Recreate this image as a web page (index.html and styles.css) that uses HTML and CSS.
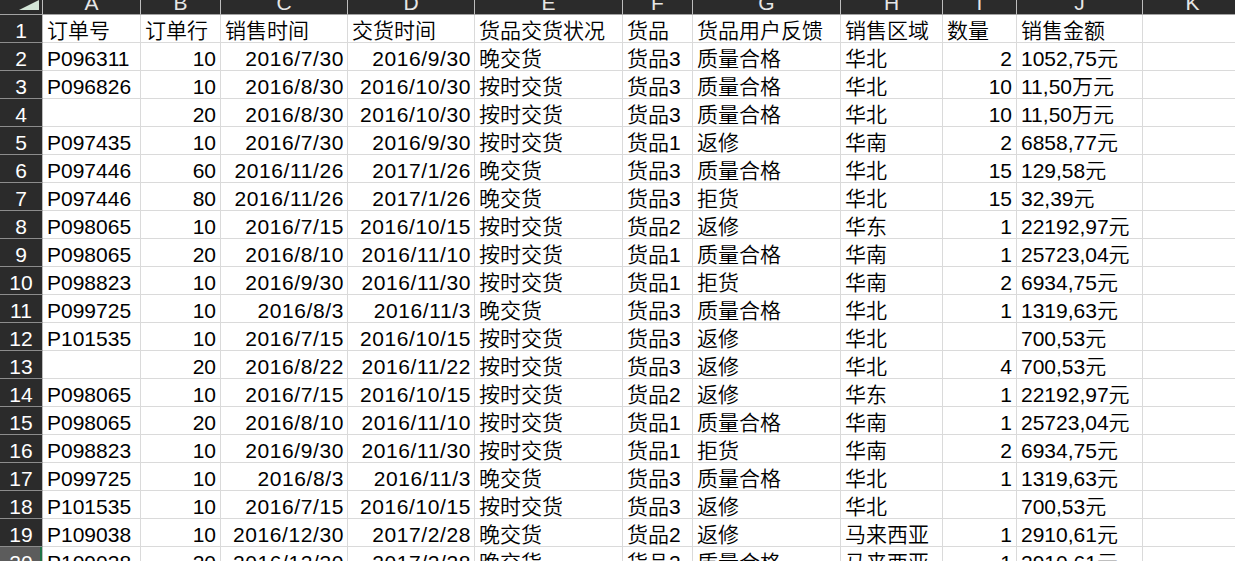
FILE: index.html
```html
<!DOCTYPE html>
<html lang="zh">
<head>
<meta charset="utf-8">
<title>Sheet</title>
<link rel="stylesheet" href="styles.css">
</head>
<body>
<div class="sheet">
  <div class="corner"><svg width="42" height="14" viewBox="0 0 42 14"><polygon points="19,10 39,0 39,10" fill="#d3e5d7"/></svg></div>
  <div class="ch">A</div><div class="ch">B</div><div class="ch">C</div><div class="ch">D</div><div class="ch">E</div><div class="ch">F</div><div class="ch">G</div><div class="ch">H</div><div class="ch">I</div><div class="ch">J</div><div class="ch">K</div>

  <div class="rh">1</div><div class="c">订单号</div><div class="c">订单行</div><div class="c">销售时间</div><div class="c">交货时间</div><div class="c">货品交货状况</div><div class="c">货品</div><div class="c">货品用户反馈</div><div class="c">销售区域</div><div class="c">数量</div><div class="c">销售金额</div><div class="c"></div>

  <div class="rh">2</div><div class="c">P096311</div><div class="c r">10</div><div class="c r d">2016/7/30</div><div class="c r d">2016/9/30</div><div class="c">晚交货</div><div class="c">货品3</div><div class="c">质量合格</div><div class="c">华北</div><div class="c r">2</div><div class="c">1052,75元</div><div class="c"></div>

  <div class="rh">3</div><div class="c">P096826</div><div class="c r">10</div><div class="c r d">2016/8/30</div><div class="c r d">2016/10/30</div><div class="c">按时交货</div><div class="c">货品3</div><div class="c">质量合格</div><div class="c">华北</div><div class="c r">10</div><div class="c">11,50万元</div><div class="c"></div>

  <div class="rh">4</div><div class="c"></div><div class="c r">20</div><div class="c r d">2016/8/30</div><div class="c r d">2016/10/30</div><div class="c">按时交货</div><div class="c">货品3</div><div class="c">质量合格</div><div class="c">华北</div><div class="c r">10</div><div class="c">11,50万元</div><div class="c"></div>

  <div class="rh">5</div><div class="c">P097435</div><div class="c r">10</div><div class="c r d">2016/7/30</div><div class="c r d">2016/9/30</div><div class="c">按时交货</div><div class="c">货品1</div><div class="c">返修</div><div class="c">华南</div><div class="c r">2</div><div class="c">6858,77元</div><div class="c"></div>

  <div class="rh">6</div><div class="c">P097446</div><div class="c r">60</div><div class="c r d">2016/11/26</div><div class="c r d">2017/1/26</div><div class="c">晚交货</div><div class="c">货品3</div><div class="c">质量合格</div><div class="c">华北</div><div class="c r">15</div><div class="c">129,58元</div><div class="c"></div>

  <div class="rh">7</div><div class="c">P097446</div><div class="c r">80</div><div class="c r d">2016/11/26</div><div class="c r d">2017/1/26</div><div class="c">晚交货</div><div class="c">货品3</div><div class="c">拒货</div><div class="c">华北</div><div class="c r">15</div><div class="c">32,39元</div><div class="c"></div>

  <div class="rh">8</div><div class="c">P098065</div><div class="c r">10</div><div class="c r d">2016/7/15</div><div class="c r d">2016/10/15</div><div class="c">按时交货</div><div class="c">货品2</div><div class="c">返修</div><div class="c">华东</div><div class="c r">1</div><div class="c">22192,97元</div><div class="c"></div>

  <div class="rh">9</div><div class="c">P098065</div><div class="c r">20</div><div class="c r d">2016/8/10</div><div class="c r d">2016/11/10</div><div class="c">按时交货</div><div class="c">货品1</div><div class="c">质量合格</div><div class="c">华南</div><div class="c r">1</div><div class="c">25723,04元</div><div class="c"></div>

  <div class="rh">10</div><div class="c">P098823</div><div class="c r">10</div><div class="c r d">2016/9/30</div><div class="c r d">2016/11/30</div><div class="c">按时交货</div><div class="c">货品1</div><div class="c">拒货</div><div class="c">华南</div><div class="c r">2</div><div class="c">6934,75元</div><div class="c"></div>

  <div class="rh">11</div><div class="c">P099725</div><div class="c r">10</div><div class="c r d">2016/8/3</div><div class="c r d">2016/11/3</div><div class="c">晚交货</div><div class="c">货品3</div><div class="c">质量合格</div><div class="c">华北</div><div class="c r">1</div><div class="c">1319,63元</div><div class="c"></div>

  <div class="rh">12</div><div class="c">P101535</div><div class="c r">10</div><div class="c r d">2016/7/15</div><div class="c r d">2016/10/15</div><div class="c">按时交货</div><div class="c">货品3</div><div class="c">返修</div><div class="c">华北</div><div class="c r"></div><div class="c">700,53元</div><div class="c"></div>

  <div class="rh">13</div><div class="c"></div><div class="c r">20</div><div class="c r d">2016/8/22</div><div class="c r d">2016/11/22</div><div class="c">按时交货</div><div class="c">货品3</div><div class="c">返修</div><div class="c">华北</div><div class="c r">4</div><div class="c">700,53元</div><div class="c"></div>

  <div class="rh">14</div><div class="c">P098065</div><div class="c r">10</div><div class="c r d">2016/7/15</div><div class="c r d">2016/10/15</div><div class="c">按时交货</div><div class="c">货品2</div><div class="c">返修</div><div class="c">华东</div><div class="c r">1</div><div class="c">22192,97元</div><div class="c"></div>

  <div class="rh">15</div><div class="c">P098065</div><div class="c r">20</div><div class="c r d">2016/8/10</div><div class="c r d">2016/11/10</div><div class="c">按时交货</div><div class="c">货品1</div><div class="c">质量合格</div><div class="c">华南</div><div class="c r">1</div><div class="c">25723,04元</div><div class="c"></div>

  <div class="rh">16</div><div class="c">P098823</div><div class="c r">10</div><div class="c r d">2016/9/30</div><div class="c r d">2016/11/30</div><div class="c">按时交货</div><div class="c">货品1</div><div class="c">拒货</div><div class="c">华南</div><div class="c r">2</div><div class="c">6934,75元</div><div class="c"></div>

  <div class="rh">17</div><div class="c">P099725</div><div class="c r">10</div><div class="c r d">2016/8/3</div><div class="c r d">2016/11/3</div><div class="c">晚交货</div><div class="c">货品3</div><div class="c">质量合格</div><div class="c">华北</div><div class="c r">1</div><div class="c">1319,63元</div><div class="c"></div>

  <div class="rh">18</div><div class="c">P101535</div><div class="c r">10</div><div class="c r d">2016/7/15</div><div class="c r d">2016/10/15</div><div class="c">按时交货</div><div class="c">货品3</div><div class="c">返修</div><div class="c">华北</div><div class="c r"></div><div class="c">700,53元</div><div class="c"></div>

  <div class="rh">19</div><div class="c">P109038</div><div class="c r">10</div><div class="c r d">2016/12/30</div><div class="c r d">2017/2/28</div><div class="c">晚交货</div><div class="c">货品2</div><div class="c">返修</div><div class="c">马来西亚</div><div class="c r">1</div><div class="c">2910,61元</div><div class="c"></div>

  <div class="rh active">20</div><div class="c">P109038</div><div class="c r">20</div><div class="c r d">2016/12/30</div><div class="c r d">2017/2/28</div><div class="c">晚交货</div><div class="c">货品2</div><div class="c">质量合格</div><div class="c">马来西亚</div><div class="c r">1</div><div class="c">2910,61元</div><div class="c"></div>
</div>
</body>
</html>
```

FILE: styles.css
```css
html, body {
  margin: 0;
  padding: 0;
  background: #ffffff;
  overflow: hidden;
}

.sheet {
  display: grid;
  grid-template-columns: 43px 98px 80px 127px 127px 148px 70px 148px 102px 74px 126px 100px;
  grid-template-rows: 15px repeat(20, 28px);
  width: 1243px;
  font-family: "Liberation Sans", "Noto Sans CJK SC", sans-serif;
  font-size: 21px;
  color: #000;
}

.corner {
  background: #2b2b2b;
  border-right: 1px solid #bdbdbd;
  border-bottom: 1px solid #a3a3a3;
  box-sizing: border-box;
  overflow: hidden;
}

.corner svg {
  display: block;
}

.ch {
  background: #2b2b2b;
  color: #e6e6e6;
  text-align: center;
  line-height: 6px;
  border-right: 1px solid #bdbdbd;
  border-bottom: 1px solid #a3a3a3;
  box-sizing: border-box;
  overflow: hidden;
  white-space: nowrap;
}

.rh {
  background: #2b2b2b;
  color: #ffffff;
  text-align: center;
  line-height: 23px;
  padding-top: 4px;
  border-right: 1px solid #bdbdbd;
  border-bottom: 1px solid #8c8c8c;
  box-sizing: border-box;
  overflow: hidden;
}

.rh.active {
  background: #5c5c5c;
  box-shadow: inset -2px 0 0 #217346;
}

.c {
  font-weight: 350;
  line-height: 23px;
  padding: 4px 3px 0 4px;
  border-right: 1px solid #dadada;
  border-bottom: 1px solid #dadada;
  box-sizing: border-box;
  white-space: nowrap;
  overflow: hidden;
}

.c.r {
  text-align: right;
  padding-right: 4px;
  padding-left: 0;
}

.c.d {
  letter-spacing: 0.6px;
  padding-right: 3px;
}
```
